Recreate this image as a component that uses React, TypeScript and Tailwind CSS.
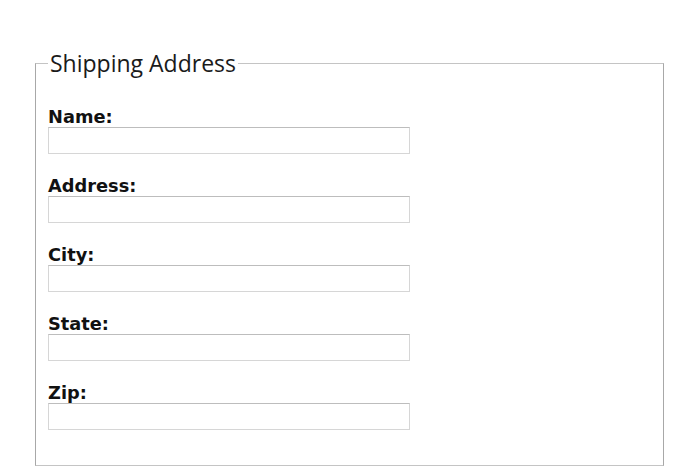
const fields = ['Name:', 'Address:', 'City:', 'State:', 'Zip:'];

export default function App() {
  return (
    <div className="min-h-[476px] w-[700px] bg-white pt-[48px] pl-[35px]">
      <fieldset className="w-[629px] border border-[#c4c4c4] border-l-[#a8a8a8] border-r-[#a8a8a8] pl-[12px] pr-[12px] pt-[29px] pb-[13px]">
        <legend
          className="px-[2px] text-[23px] leading-[30px] text-[#1a1a1a]"
          style={{ fontFamily: '"Open Sans", "Noto Sans", sans-serif' }}
        >
          Shipping Address
        </legend>
        {fields.map((f) => (
          <div key={f} className="mb-[22px]">
            <label
              className="block text-[17.8px] font-bold leading-[20px] text-[#111]"
              style={{ fontFamily: '"DejaVu Sans", Verdana, sans-serif' }}
            >
              {f}
            </label>
            <input
              type="text"
              className="block h-[27px] w-[362px] border border-[#d6d6d6] border-t-[#bdbdbd] bg-white outline-none"
            />
          </div>
        ))}
      </fieldset>
    </div>
  );
}
